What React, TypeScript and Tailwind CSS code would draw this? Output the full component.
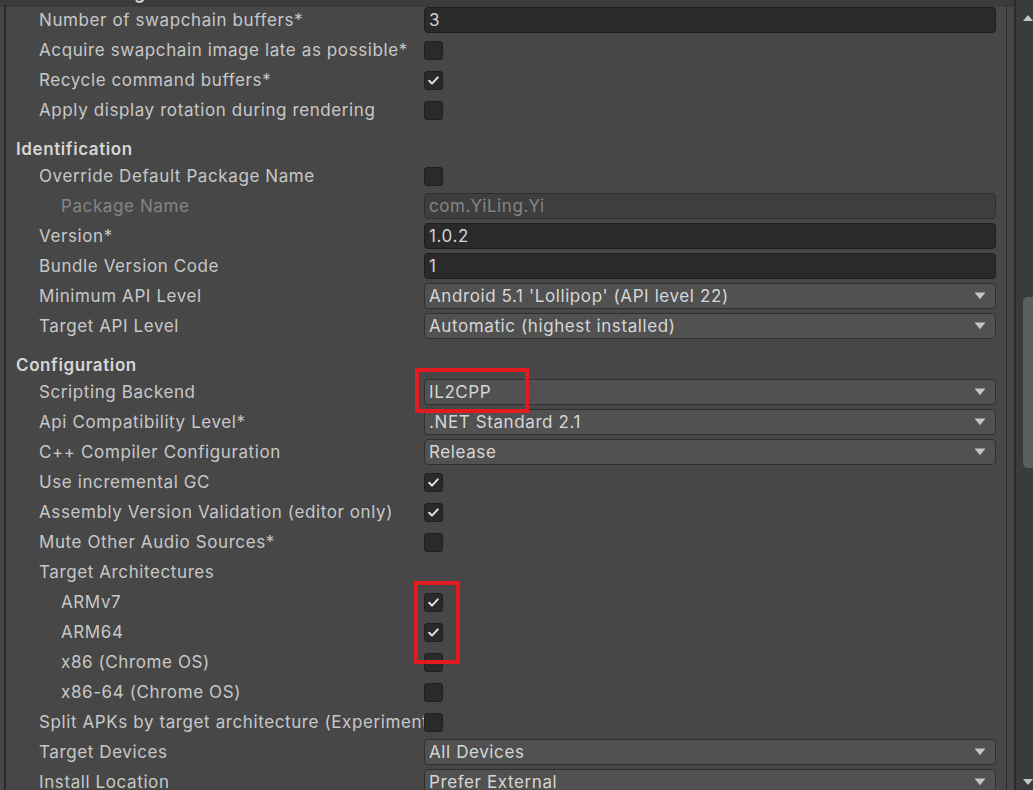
import React from "react";

type Field =
  | { kind: "check"; checked?: boolean }
  | { kind: "text"; value: string; disabled?: boolean }
  | { kind: "drop"; value: string };

interface Row {
  label: string;
  indent?: boolean;
  dim?: boolean;
  field: Field;
}

interface Section {
  title?: string;
  rows: Row[];
}

const SECTIONS: Section[] = [
  {
    rows: [
      { label: "Number of swapchain buffers*", field: { kind: "text", value: "3" } },
      { label: "Acquire swapchain image late as possible*", field: { kind: "check" } },
      { label: "Recycle command buffers*", field: { kind: "check", checked: true } },
      { label: "Apply display rotation during rendering", field: { kind: "check" } },
    ],
  },
  {
    title: "Identification",
    rows: [
      { label: "Override Default Package Name", field: { kind: "check" } },
      {
        label: "Package Name",
        indent: true,
        dim: true,
        field: { kind: "text", value: "com.YiLing.Yi", disabled: true },
      },
      { label: "Version*", field: { kind: "text", value: "1.0.2" } },
      { label: "Bundle Version Code", field: { kind: "text", value: "1" } },
      {
        label: "Minimum API Level",
        field: { kind: "drop", value: "Android 5.1 'Lollipop' (API level 22)" },
      },
      {
        label: "Target API Level",
        field: { kind: "drop", value: "Automatic (highest installed)" },
      },
    ],
  },
  {
    title: "Configuration",
    rows: [
      { label: "Scripting Backend", field: { kind: "drop", value: "IL2CPP" } },
      { label: "Api Compatibility Level*", field: { kind: "drop", value: ".NET Standard 2.1" } },
      { label: "C++ Compiler Configuration", field: { kind: "drop", value: "Release" } },
      { label: "Use incremental GC", field: { kind: "check", checked: true } },
      { label: "Assembly Version Validation (editor only)", field: { kind: "check", checked: true } },
      { label: "Mute Other Audio Sources*", field: { kind: "check" } },
      { label: "Target Architectures", field: { kind: "drop", value: "" } },
      { label: "ARMv7", indent: true, field: { kind: "check", checked: true } },
      { label: "ARM64", indent: true, field: { kind: "check", checked: true } },
      { label: "x86 (Chrome OS)", indent: true, field: { kind: "check" } },
      { label: "x86-64 (Chrome OS)", indent: true, field: { kind: "check" } },
      { label: "Split APKs by target architecture (Experimental)", field: { kind: "check" } },
      { label: "Target Devices", field: { kind: "drop", value: "All Devices" } },
      { label: "Install Location", field: { kind: "drop", value: "Prefer External" } },
    ],
  },
];

function Checkbox({ checked }: { checked?: boolean }) {
  return (
    <div className="w-[19px] h-[19px] rounded-[3px] bg-[#2a2a2a] border border-[#1f1f1f] flex items-center justify-center">
      {checked && (
        <svg width="13" height="13" viewBox="0 0 13 13">
          <path
            d="M2.2 6.8 L5 9.6 L10.8 3.4"
            fill="none"
            stroke="#e4e4e4"
            strokeWidth="2"
            strokeLinecap="round"
            strokeLinejoin="round"
          />
        </svg>
      )}
    </div>
  );
}

function TextField({ value, disabled }: { value: string; disabled?: boolean }) {
  return (
    <div
      className={
        disabled
          ? "h-[26px] w-full rounded-[4px] bg-[#3e3e3e] border border-[#2f2f2f] pl-[4px] flex items-center text-[#858585]"
          : "h-[26px] w-full rounded-[4px] bg-[#2a2a2a] border border-[#1e1e1e] pl-[4px] flex items-center text-[#d2d2d2]"
      }
    >
      {value}
    </div>
  );
}

function Dropdown({ value }: { value: string }) {
  return (
    <div className="h-[26px] w-full rounded-[4px] bg-[#515151] border border-[#303030] pl-[4px] pr-[9px] flex items-center justify-between text-[#d6d6d6]">
      <span>{value}</span>
      <svg width="12" height="8" viewBox="0 0 12 8">
        <path d="M0.5 0.5 H11.5 L6 7.2 Z" fill="#c4c4c4" />
      </svg>
    </div>
  );
}

function FieldView({ field }: { field: Field }) {
  if (field.kind === "check") return <Checkbox checked={field.checked} />;
  if (field.kind === "text") return <TextField value={field.value} disabled={field.disabled} />;
  return <Dropdown value={field.value} />;
}

function PropRow({ row }: { row: Row }) {
  // "Target Architectures" is a plain foldout label without a control
  const labelOnly = row.label === "Target Architectures";
  return (
    <div className="h-[30px] flex items-center">
      <div
        className={
          "w-[418px] shrink-0 overflow-hidden whitespace-nowrap " +
          (row.indent ? "pl-[55px] " : "pl-[33px] ") +
          (row.dim ? "text-[#858585]" : "text-[#c8c8c8]")
        }
      >
        {row.label}
      </div>
      <div className="flex-1 pr-[10px] flex items-center">
        {!labelOnly && <FieldView field={row.field} />}
      </div>
    </div>
  );
}

function Scrollbar() {
  return (
    <div className="w-[19px] shrink-0 h-full bg-[#3b3b3b] border-l-2 border-[#2c2c2c] flex flex-col">
      <div className="h-[14px]" />
      <svg width="17" height="8" viewBox="0 0 17 8" className="shrink-0">
        <path d="M7 7 L12 1 L17 7 Z" fill="#c8c8c8" />
      </svg>
      <div className="h-[275px]" />
      <div className="ml-[7px] h-[171px] w-[14px] rounded-[5px] bg-[#5e5e5e]" />
      <div className="flex-1" />
      <svg width="17" height="8" viewBox="0 0 17 8" className="shrink-0 mb-[4px]">
        <path d="M7 1 L17 1 L12 7 Z" fill="#c8c8c8" />
      </svg>
    </div>
  );
}

export default function App() {
  return (
    <div
      className="relative w-[1033px] h-[790px] overflow-hidden bg-[#474747] flex text-[17px] leading-[20px] tracking-[0.6px]"
      style={{ fontFamily: "Inter, 'Noto Sans', sans-serif" }}
    >
      <div className="flex-1 flex flex-col min-w-0">
        <div className="h-[7px] bg-[#3b3b3b] overflow-hidden shrink-0">
          <div className="pl-[16px] -mt-[17px] font-bold text-[#d4d4d4]">Vulkan Settings</div>
        </div>
        <div className="flex flex-1 -mt-[2px]">
          <div className="w-[1005px] ml-[4px] border-l-2 border-[#2a2a2a] border-r border-r-[#2b2b2b] flex flex-col">
            {SECTIONS.map((s, i) => (
              <div key={i}>
                {s.title && (
                  <div className="h-[36px] flex items-end pb-[2px] pl-[10px] font-semibold text-[#d6d6d6]">
                    {s.title}
                  </div>
                )}
                {s.rows.map((r) => (
                  <PropRow key={r.label} row={r} />
                ))}
              </div>
            ))}
          </div>
          <div className="w-[7px]" />
        </div>
      </div>
      <Scrollbar />

      {/* red annotation boxes */}
      <div className="absolute left-[415px] top-[368px] w-[114px] h-[45px] border-[4px] border-[#e11b1f]" />
      <div className="absolute left-[414px] top-[581px] w-[46px] h-[83px] border-[4px] border-[#e11b1f]" />
    </div>
  );
}
